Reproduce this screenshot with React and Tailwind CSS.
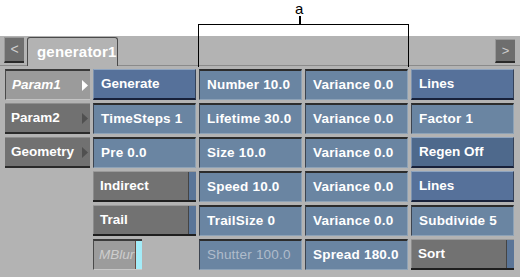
import React from 'react';

const font = { fontFamily: '"Liberation Sans", Arial, sans-serif' };

/* sunken value field */
const Field = ({ children, dim }) => (
  <div className={`h-full flex items-center pl-[7px] bg-[#6a85a2] border-t-2 border-l border-t-[#2c2c2c] border-l-[#3c4450] border-b border-r border-b-[#8da2b7] border-r-[#8da2b7] text-[13.5px] font-bold tracking-[0.2px] ${dim ? 'text-[#b0bccb] font-normal' : 'text-white'}`}>
    {children}
  </div>
);

/* raised blue button */
const Blue = ({ children, dark }) => (
  <div className={`h-full flex items-center pl-[7px] ${dark ? 'bg-[#4e698c]' : 'bg-[#56719a]'} border-t border-l border-t-[#8ea4c0] border-l-[#7d93b0] border-b-2 border-r border-b-[#18213a] border-r-[#34425a] text-white text-[13.5px] font-bold`}>
    {children}
  </div>
);

/* grey toggle with blue strip */
const Toggle = ({ children }) => (
  <div className="h-full flex border-t border-t-[#9a9a9a] border-b-2 border-b-[#1f1f1f]">
    <div className="flex-1 flex items-center pl-[6px] bg-[#727272] border-l border-l-[#8c8c8c] border-r border-r-[#444] text-white text-[13.5px] font-bold">
      {children}
    </div>
    <div className="w-[7px] bg-[#5a7598]" />
  </div>
);

const Param = ({ children, active }) => (
  <div className={`h-full flex items-center justify-between pl-[6px] pr-[2px] text-[13.5px] font-bold text-white ${active ? 'bg-[#9b9b9b] italic border-t-2 border-l border-t-[#3a3a3a] border-l-[#4a4a4a] border-b border-b-[#c4c4c4]' : 'bg-[#717171] border-t border-t-[#8e8e8e] border-b-2 border-b-[#2a2a2a]'}`}>
    <span>{children}</span>
    <svg width="6" height="11" viewBox="0 0 6 11" className="not-italic">
      <polygon points="0,0 6,5.5 0,11" fill={active ? '#ffffff' : '#505050'} />
    </svg>
  </div>
);

export default function App() {
  return (
    <div className="w-[520px] h-[277px] bg-white relative overflow-hidden" style={font}>
      {/* annotation */}
      <div className="absolute left-[295px] top-[1px] text-[15px] text-black leading-none">a</div>
      <div className="absolute left-[299px] top-[16px] w-[1.5px] h-[9px] bg-black" />
      <div className="absolute left-[198px] top-[24px] w-[211px] h-[43px] border-t-[1.5px] border-l-[1.5px] border-r-[1.5px] border-black z-10" />

      <div className="h-[36px]" />
      <div className="bg-[#b3b3b3] h-[241px] flex flex-col">
        {/* tab bar */}
        <div className="h-[30px] flex items-end px-[4px] border-b border-b-[#8a8a8a] relative">
          <div className="w-[20px] h-[26px] mb-[2px] bg-[#6e6e6e] border-t border-l border-t-[#999] border-l-[#999] border-b-2 border-b-[#2a2a2a] flex items-center justify-center text-[#cfcfcf] text-[14px]">&lt;</div>
          <div className="ml-[3px] w-[91px] h-[29px] -mb-px bg-[#b3b3b3] border-t border-l border-r border-[#4a4a4a] border-b-0 rounded-t-[3px] flex items-center pl-[9px] text-white text-[15px] font-bold tracking-[0.2px]">
            generator1
          </div>
          <div className="ml-auto w-[20px] h-[24px] mb-[2px] mr-[1px] bg-[#6e6e6e] border-t border-l border-t-[#999] border-l-[#999] border-b-2 border-b-[#2a2a2a] flex items-center justify-center text-[#cfcfcf] text-[13px]">&gt;</div>
        </div>

        {/* parameter grid */}
        <div className="grid grid-cols-[85px_103px_103px_103px_103px] grid-rows-[31px_31px_31px_31px_31px_31px] gap-x-[3px] gap-y-[3px] pl-[5px] pt-[3px]">
          <Param active>Param1</Param>
          <Blue>Generate</Blue>
          <Field>Number 10.0</Field>
          <Field>Variance 0.0</Field>
          <Blue>Lines</Blue>

          <Param>Param2</Param>
          <Field>TimeSteps 1</Field>
          <Field>Lifetime 30.0</Field>
          <Field>Variance 0.0</Field>
          <Field>Factor 1</Field>

          <Param>Geometry</Param>
          <Field>Pre 0.0</Field>
          <Field>Size 10.0</Field>
          <Field>Variance 0.0</Field>
          <Blue dark>Regen Off</Blue>

          <div />
          <Toggle>Indirect</Toggle>
          <Field>Speed 10.0</Field>
          <Field>Variance 0.0</Field>
          <Blue>Lines</Blue>

          <div />
          <Toggle>Trail</Toggle>
          <Field>TrailSize 0</Field>
          <Field>Variance 0.0</Field>
          <Field>Subdivide 5</Field>

          <div />
          <div className="h-full flex">
            <div className="w-[49px] flex border-t-2 border-t-[#3a3a3a] border-l border-l-[#4a4a4a] border-b border-b-[#c8c8c8]">
              <div className="flex-1 flex items-center pl-[5px] bg-[#9c9c9c] border-r border-r-[#6a4a40] text-[#cdcdcd] text-[13.5px] italic">MBlur</div>
              <div className="w-[6px] bg-[#a3ecf8]" />
            </div>
          </div>
          <Field dim>Shutter 100.0</Field>
          <Field>Spread 180.0</Field>
          <Toggle>Sort</Toggle>
        </div>
      </div>
    </div>
  );
}
